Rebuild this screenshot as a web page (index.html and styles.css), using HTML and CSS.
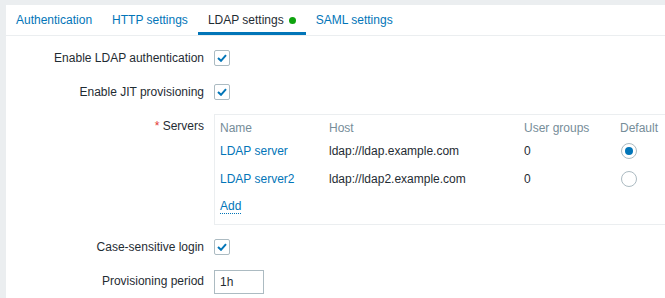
FILE: index.html
```html
<!DOCTYPE html>
<html>
<head>
<meta charset="utf-8">
<link rel="stylesheet" href="styles.css">
</head>
<body>
<div class="panel">
  <ul class="tabs">
    <li class="tab"><a>Authentication</a></li>
    <li class="tab"><a>HTTP settings</a></li>
    <li class="tab active"><a>LDAP settings</a><span class="dot"></span></li>
    <li class="tab"><a>SAML settings</a></li>
  </ul>
  <div class="form">
    <div class="label">Enable LDAP authentication</div>
    <div class="field"><span class="cb"><svg width="10" height="8" viewBox="0 0 10 8"><path d="M1 4 L4 6.8 L9 1.2" fill="none" stroke="#0275b8" stroke-width="2"/></svg></span></div>

    <div class="label">Enable JIT provisioning</div>
    <div class="field"><span class="cb"><svg width="10" height="8" viewBox="0 0 10 8"><path d="M1 4 L4 6.8 L9 1.2" fill="none" stroke="#0275b8" stroke-width="2"/></svg></span></div>

    <div class="label"><span class="req">*</span> Servers</div>
    <div class="field table-field">
      <div class="servers">
        <table>
          <thead>
            <tr><th class="c1">Name</th><th class="c2">Host</th><th class="c3">User groups</th><th class="c4">Default</th></tr>
          </thead>
          <tbody>
            <tr><td><a class="link">LDAP server</a></td><td>ldap://ldap.example.com</td><td>0</td><td><span class="radio checked"></span></td></tr>
            <tr><td><a class="link">LDAP server2</a></td><td>ldap://ldap2.example.com</td><td>0</td><td><span class="radio"></span></td></tr>
            <tr class="add-row"><td colspan="4"><a class="add">Add</a></td></tr>
          </tbody>
        </table>
      </div>
    </div>

    <div class="label">Case-sensitive login</div>
    <div class="field"><span class="cb"><svg width="10" height="8" viewBox="0 0 10 8"><path d="M1 4 L4 6.8 L9 1.2" fill="none" stroke="#0275b8" stroke-width="2"/></svg></span></div>

    <div class="label">Provisioning period</div>
    <div class="field"><span class="input">1h</span></div>
  </div>
</div>
</body>
</html>
```

FILE: styles.css
```css
html, body {
  margin: 0;
  padding: 0;
  overflow: hidden;
}
body {
  background: #ebeef0;
  font-family: "Liberation Sans", Arial, sans-serif;
  font-size: 12px;
  color: #1f2c33;
  padding: 5px 0 0 6px;
  height: 298px;
  box-sizing: border-box;
}
.panel {
  background: #fff;
  height: 293px;
  overflow: hidden;
}
.tabs {
  list-style: none;
  margin: 0;
  padding: 0;
  display: flex;
  height: 30px;
  border-bottom: 1px solid #ebeef0;
}
.tab {
  padding: 8px 10px 6px;
  line-height: 14px;
  border-bottom: 3px solid transparent;
  color: #0275b8;
  display: flex;
  align-items: center;
}
.tab.active {
  border-bottom-color: #0275b8;
  color: #1f2c33;
}
.dot {
  width: 7px;
  height: 7px;
  border-radius: 50%;
  background: #0ea30e;
  margin-left: 5px;
  margin-top: 1px;
}
.form {
  display: grid;
  grid-template-columns: 198px 1fr;
  column-gap: 10px;
  row-gap: 10px;
  padding-top: 10px;
}
.label {
  text-align: right;
  line-height: 24px;
  height: 24px;
}
.req {
  color: #e33734;
}
.field {
  height: 24px;
  display: flex;
  align-items: center;
  min-width: 0;
}
.table-field {
  height: auto;
  display: block;
  overflow: hidden;
}
.cb {
  width: 14px;
  height: 14px;
  border: 1px solid #acbbc2;
  border-radius: 2px;
  display: flex;
  align-items: center;
  justify-content: center;
}
.servers {
  border: 1px solid #ebeef0;
  padding: 0 5px 6px;
  width: 600px;
}
table {
  border-collapse: collapse;
}
th, td {
  padding: 0;
  text-align: left;
  white-space: nowrap;
}
th {
  font-weight: normal;
  color: #768d99;
  height: 18px;
  line-height: 18px;
  vertical-align: middle;
  padding-top: 4px;
}
td {
  height: 28px;
  vertical-align: middle;
}
.c1 { width: 109px; }
.c2 { width: 195px; }
.c3 { width: 96px; }
.c4 { width: 100px; }
.link {
  color: #0275b8;
}
.add-row td {
  height: 24px;
  padding-top: 1px;
}
.add {
  color: #0275b8;
  border-bottom: 1px dotted #0275b8;
}
.radio {
  display: block;
  width: 14px;
  height: 14px;
  border: 1px solid #acbbc2;
  border-radius: 50%;
  margin-left: 1px;
  position: relative;
}
.radio.checked::after {
  content: "";
  position: absolute;
  left: 3px;
  top: 3px;
  width: 8px;
  height: 8px;
  border-radius: 50%;
  background: #0275b8;
}
.input {
  width: 38px;
  height: 22px;
  line-height: 22px;
  border: 1px solid #acbbc2;
  padding: 0 5px;
  margin-top: 1px;
}
```
